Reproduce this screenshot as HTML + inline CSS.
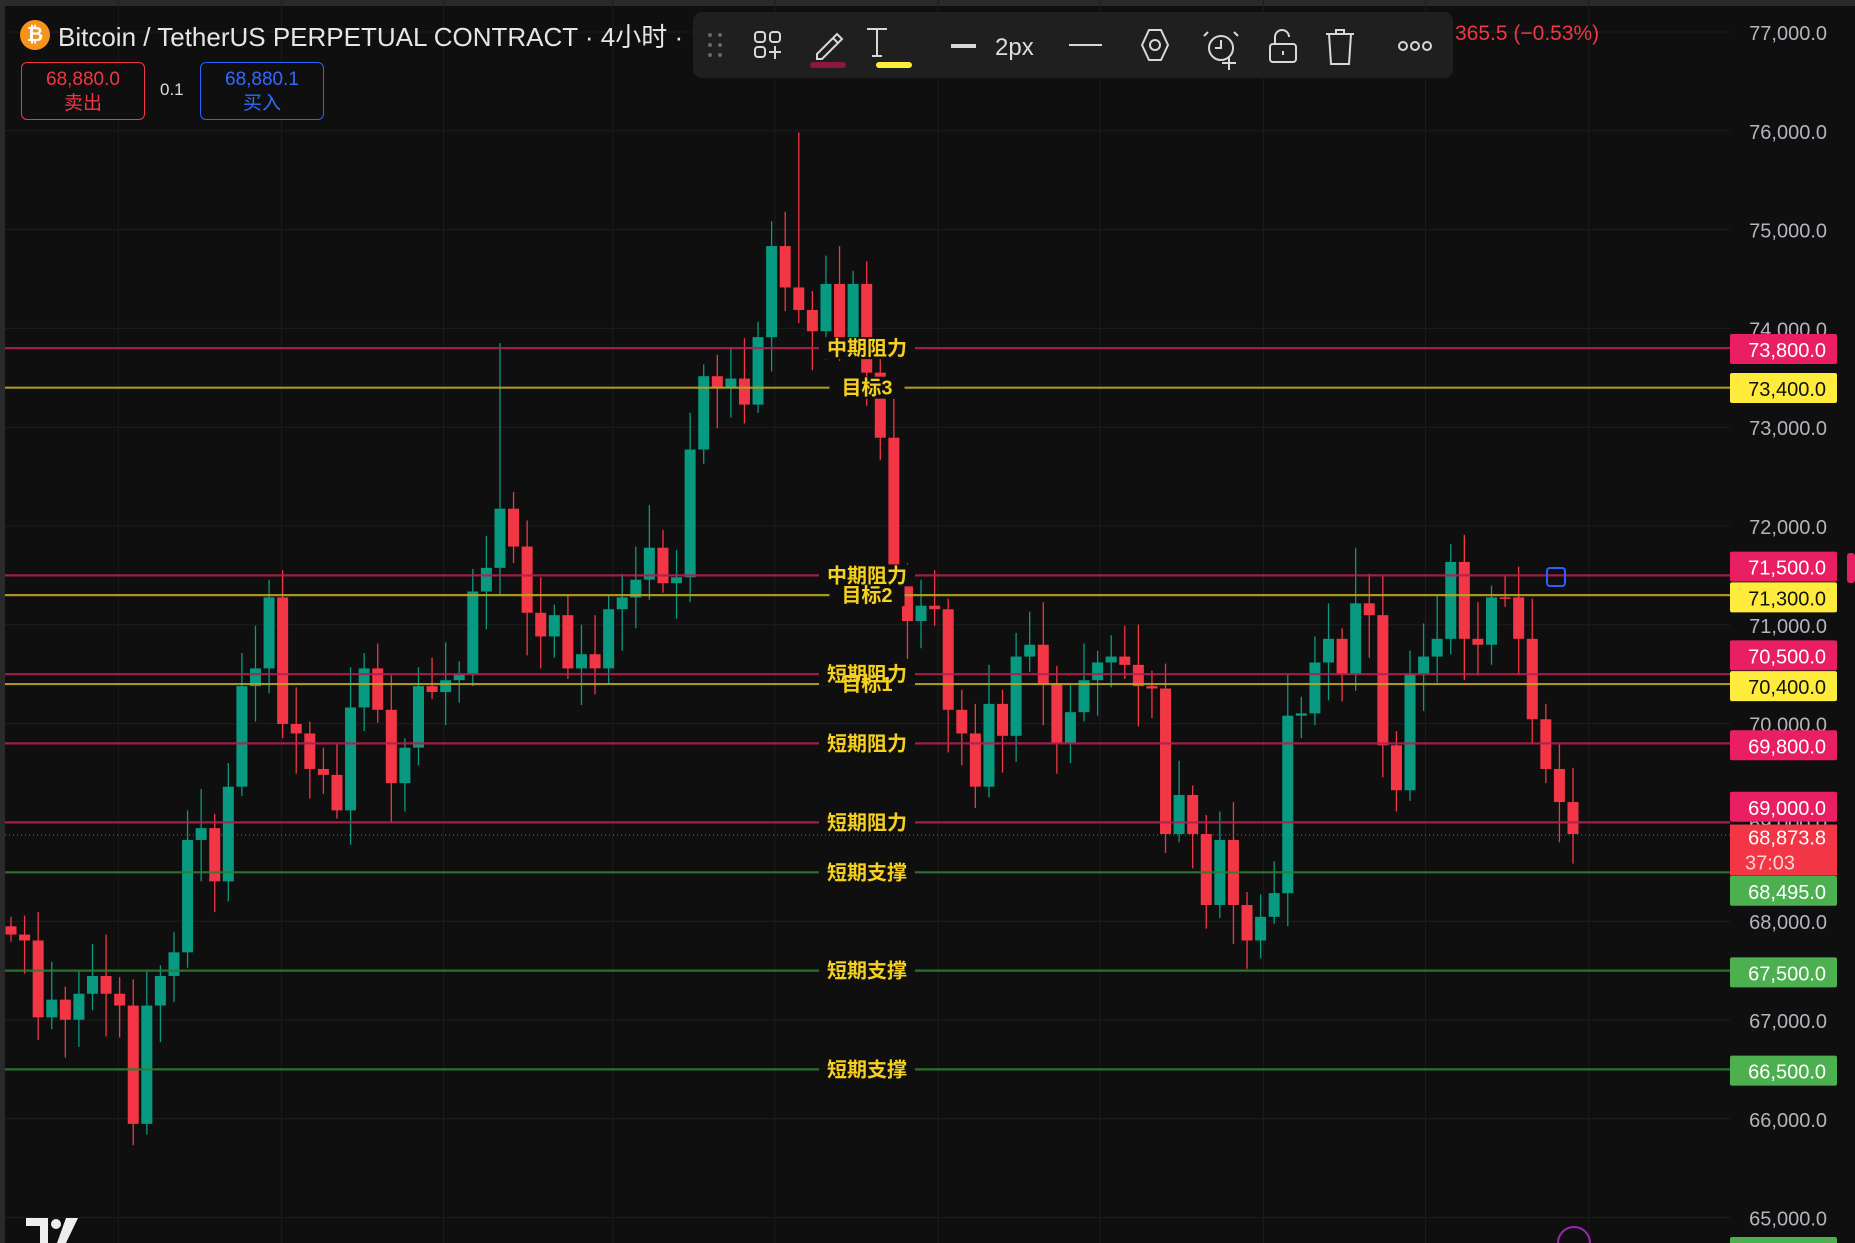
<!DOCTYPE html>
<html><head><meta charset="utf-8">
<style>
html,body{margin:0;padding:0;background:#0f0f0f;width:1855px;height:1243px;overflow:hidden;font-family:"Liberation Sans","Noto Sans CJK SC",sans-serif}
#wrap{position:absolute;left:0;top:0;width:1855px;height:1243px;background:#0f0f0f;border-top:6px solid #2a2a2a;border-left:5px solid #2a2a2a;box-sizing:border-box}
svg{position:absolute;left:0;top:0}
.hdr{position:absolute;left:58px;top:17px;color:#e6e6e6;font-size:26px;white-space:nowrap}
.btc{position:absolute;left:20px;top:20px;width:30px;height:30px;border-radius:50%;background:#f7931a;color:#fff;font-weight:bold;font-size:20px;text-align:center;line-height:30px}
.box{position:absolute;top:62px;width:124px;height:58px;border-radius:6px;box-sizing:border-box;text-align:center;font-size:19px;line-height:24px;padding-top:5px;background:#0f0f0f}
.tb{position:absolute;left:693px;top:12px;width:760px;height:66px;background:#1f1f1f;border-radius:9px}
.chg{position:absolute;left:1455px;top:22px;color:#f23645;font-size:21px}
</style></head><body>
<div id="wrap"></div>
<svg id="s" width="1855" height="1243"></svg>
<div class="btc">₿</div>
<div class="hdr">Bitcoin / TetherUS PERPETUAL CONTRACT · 4小时 ·</div>
<div class="chg">365.5 (−0.53%)</div>
<div class="box" style="left:21px;border:1.5px solid #f23645;color:#f23645">68,880.0<br>卖出</div>
<div style="position:absolute;left:160px;top:80px;color:#ddd;font-size:17px">0.1</div>
<div class="box" style="left:200px;border:1.5px solid #2962ff;color:#2f6bff">68,880.1<br>买入</div>
<div class="tb">
<svg width="760" height="66" style="position:absolute;left:0;top:0" fill="none" stroke="#d8d8d8" stroke-width="2">
<g fill="#666" stroke="none"><circle cx="17" cy="23" r="2"/><circle cx="27" cy="23" r="2"/><circle cx="17" cy="33" r="2"/><circle cx="27" cy="33" r="2"/><circle cx="17" cy="43" r="2"/><circle cx="27" cy="43" r="2"/></g>
<rect x="62" y="20" width="10" height="10" rx="3"/><rect x="77" y="20" width="10" height="10" rx="3"/><rect x="62" y="35" width="10" height="10" rx="3"/><path d="M82 34v13M76 40h12"/>
<path d="M124 42l20-20 5 5-20 20h-5z M140 26l5 5"/>
<rect x="117" y="50" width="36" height="6" rx="3" fill="#8e1742" stroke="none"/>
<path d="M174 17h20M184 17v27M179 44h10"/>
<rect x="183" y="50" width="36" height="6" rx="3" fill="#ffeb3b" stroke="none"/>
<path d="M258 34h25" stroke-width="4"/>
<text x="302" y="43" fill="#ddd" stroke="none" font-size="24" font-family="Liberation Sans">2px</text>
<path d="M376 33h33"/>
<path d="M456 18l12 0 7 15-7 15h-12l-7-15z"/><circle cx="462" cy="33" r="5"/>
<circle cx="528" cy="36" r="12"/><path d="M528 28v8h-6M515 20l-4 4M541 20l4 4M536 44v14M529 51h14"/>
<rect x="577" y="32" width="26" height="18" rx="3"/><path d="M582 32v-7a7 7 0 0 1 14 0"/><path d="M590 39v4"/>
<path d="M633 22h28M643 22v-4h8v4M636 22l2 30h18l2-30"/>
<g><circle cx="710" cy="34" r="4"/><circle cx="722" cy="34" r="4"/><circle cx="734" cy="34" r="4"/></g>
</svg></div>
<script>
var S=1.183, ns="http://www.w3.org/2000/svg", svg=document.getElementById('s');
function el(t,a,txt){var e=document.createElementNS(ns,t);for(var k in a)e.setAttribute(k,a[k]);if(txt)e.textContent=txt;svg.appendChild(e);return e;}
function Y(p){return 32+(77000-p)/1000*98.8;}
var AX=1730;
[100,238,375,518,655,793,930,1068,1205,1343].forEach(function(x){el('line',{x1:x*S,x2:x*S,y1:0,y2:1243,stroke:'#1c1c1c','stroke-width':1});});
for(var p=65000;p<=77000;p+=1000){el('line',{x1:5,x2:AX,y1:Y(p),y2:Y(p),stroke:'#1e1e1e','stroke-width':1});}
var c=[790,795,860,845,862,840,825,840,850,950,850,825,805,710,700,745,665,580,565,505,612,620,650,655,685,598,565,600,662,632,580,585,575,570,500,480,430,462,518,538,520,565,553,565,515,505,490,463,493,488,380,318,328,320,342,285,208,243,262,280,240,290,240,315,370,490,525,512,515,600,620,665,595,622,555,545,578,628,602,575,560,555,562,580,582,705,672,705,765,710,765,795,775,755,605,603,560,540,570,510,520,630,668,570,555,540,475,540,545,505,505,540,608,650,678,705];
var prev=783, sp=(1573-11)/(c.length-1);
for(var i=0;i<c.length;i++){
 var x=11+sp*i, o=prev, cl=c[i], up=cl<o;
 var col=up?'#089981':'#f23645';
 var hi=Math.min(o,cl)-(8+((i*37)%29)), lo=Math.max(o,cl)+(6+((i*53)%31));
 if(i==58)hi=112; if(i==36)hi=290; if(i==99)hi=463;
 el('line',{x1:x,x2:x,y1:hi*S,y2:lo*S,stroke:col,'stroke-width':1.3});
 var t=Math.min(o,cl)*S,h=Math.max(Math.abs(o-cl)*S,1.5);
 el('rect',{x:x-5.5,y:t,width:11,height:h,fill:col});
 prev=cl;
}
var L=[[73800,'#b2204f','中期阻力'],[73400,'#b8a428','目标3'],[71500,'#b2204f','中期阻力'],[71300,'#b8a428','目标2'],[70500,'#b2204f','短期阻力'],[70400,'#b8a428','目标1'],[69800,'#b2204f','短期阻力'],[69000,'#b2204f','短期阻力'],[68495,'#2e7d32','短期支撑'],[67500,'#2e7d32','短期支撑'],[66500,'#2e7d32','短期支撑']];
L.forEach(function(l){var y=Y(l[0]);el('line',{x1:5,x2:AX,y1:y,y2:y,stroke:l[1],'stroke-width':2.2,opacity:0.9});});
el('line',{x1:5,x2:AX,y1:Y(68873.8),y2:Y(68873.8),stroke:'#f23645','stroke-width':1,'stroke-dasharray':'1 3'});
L.forEach(function(l){var y=Y(l[0]);var w=l[2].length*21+12;
 el('rect',{x:867-w/2,y:y-11,width:w,height:22,fill:'#0f0f0f'});});
L.forEach(function(l){var y=Y(l[0]);
 el('text',{x:867,y:y+7,fill:'#f5d020','font-size':20,'text-anchor':'middle','font-family':'"Liberation Sans","Noto Sans CJK SC",sans-serif','font-weight':'bold'},l[2]);});
for(var p=65000;p<=77000;p+=1000){el('text',{x:1827,y:Y(p)+8,fill:'#b2b5be','font-size':20,'text-anchor':'end','font-family':'Liberation Sans'},p.toLocaleString('en-US')+'.0');}
var B=[[73800,295,'#e91e63','#fff'],[73400,328,'#ffeb3b','#111'],[71500,479,'#e91e63','#fff'],[71300,505,'#ffeb3b','#111'],[70500,554,'#e91e63','#fff'],[70400,580,'#ffeb3b','#111'],[69800,630,'#e91e63','#fff'],[69000,682,'#e91e63','#fff'],[68495,753,'#4caf50','#fff'],[67500,822,'#4caf50','#fff'],[66500,905,'#4caf50','#fff']];
B.forEach(function(b){var y=b[1]*S;el('rect',{x:1730,y:y-15,width:107,height:30,fill:b[2],rx:2});el('text',{x:1826,y:y+8,fill:b[3],'font-size':20,'text-anchor':'end','font-family':'Liberation Sans'},b[0].toLocaleString('en-US')+'.0');});
var yt=697*S;el('rect',{x:1730,y:yt,width:107,height:(740-697)*S,fill:'#f23645'});
el('text',{x:1826,y:yt+20,fill:'#fff','font-size':20,'text-anchor':'end','font-family':'Liberation Sans'},'68,873.8');
el('text',{x:1745,y:yt+45,fill:'#fcd2d5','font-size':20,'font-family':'Liberation Sans'},'37:03');
el('rect',{x:1730,y:1237,width:107,height:10,fill:'#4caf50',rx:2});
el('rect',{x:1847,y:553,width:8,height:30,fill:'#e91e63',rx:3});
el('rect',{x:1547,y:568,width:18,height:18,fill:'none',stroke:'#2962ff','stroke-width':2,rx:3});
el('circle',{cx:1574,cy:1243,r:16,fill:'none',stroke:'#9c27b0','stroke-width':2});
el('path',{d:'M26 1218h22v25h-8v-17h-14z',fill:'#eee'});el('circle',{cx:56,cy:1224,r:5,fill:'#eee'});el('path',{d:'M66 1218h12l-12 25h-9z',fill:'#eee'});
</script>
</body></html>
